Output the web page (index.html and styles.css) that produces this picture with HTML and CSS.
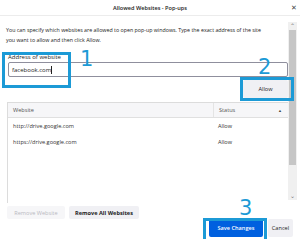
FILE: index.html
```html
<!DOCTYPE html>
<html lang="en">
  <head>
    <meta charset="UTF-8" />
    <title>Allowed Websites - Pop-ups</title>
    <link rel="stylesheet" href="styles.css">
  </head>
  <body>
    <!-- title bar -->
    <div class="titlebar">
      <span class="title">Allowed Websites - Pop-ups</span>
      <span class="close">&#x2715;</span>
    </div>

    <div class="main">
      <div class="content">
        <p class="intro">
          You can specify which websites are allowed to open pop-up windows. Type the exact address of the site<br>
          you want to allow and then click Allow.
        </p>

        <label class="label">Address of website</label>
        <div class="urlbox">facebook.com<span class="caret"></span></div>

        <div class="allowrow">
          <button class="btn allow">Allow</button>
        </div>

        <!-- site list -->
        <div class="table">
          <div class="thead">
            <div class="col-site">Website</div>
            <div class="col-status">Status <span class="sort">&#9650;</span></div>
          </div>
          <div class="trow">
            <div class="col-site">http://drive.google.com</div>
            <div class="col-status">Allow</div>
          </div>
          <div class="trow">
            <div class="col-site">https://drive.google.com</div>
            <div class="col-status">Allow</div>
          </div>
        </div>

        <div class="actions">
          <button class="btn disabled">Remove Website</button>
          <button class="btn bold">Remove All Websites</button>
        </div>
      </div>

      <div class="scrollbar">
        <span class="arrow">&#8963;</span>
        <div class="track"><div class="thumb"></div></div>
        <span class="arrow">&#8964;</span>
      </div>
    </div>

    <div class="footer">
      <button class="btn primary">Save Changes</button>
      <button class="btn cancel">Cancel</button>
    </div>

    <!-- tutorial marks -->
    <div class="mark box1"></div>
    <div class="mark box2"></div>
    <div class="mark box3"></div>
    <span class="num n1">1</span>
    <span class="num n2">2</span>
    <span class="num n3">3</span>
  </body>
</html>
```

FILE: styles.css
```css
body {
  margin: 0;
  width: 300px;
  height: 239px;
  overflow: hidden;
  background: #fff;
  font-family: "Open Sans", "Noto Sans", sans-serif;
  font-size: 6px;
  color: #222;
  position: relative;
}

/* title bar */
.titlebar {
  height: 15px;
  border-bottom: 1px solid #ececec;
  display: flex;
  align-items: center;
  justify-content: center;
  position: relative;
}
.title {
  font-weight: 600;
  font-size: 5.6px;
}
.close {
  position: absolute;
  right: 3px;
  top: 3px;
  font-size: 7px;
  color: #444;
}

.main {
  display: flex;
  height: 187px;
}

.content {
  width: 282px;
  padding-left: 6px;
  padding-top: 9px;
}

.intro {
  margin: 0 0 8px 0;
  line-height: 10px;
  font-size: 5.3px;
  white-space: nowrap;
}

.label {
  display: block;
  font-size: 6px;
  margin-left: 2px;
  line-height: 8px;
}

.urlbox {
  margin-left: 2px;
  margin-top: 1px;
  height: 13px;
  border: 1px solid #8f8f9d;
  border-radius: 2px;
  display: flex;
  align-items: center;
  padding-left: 3px;
  font-size: 6px;
}
.caret {
  width: 1px;
  height: 8px;
  background: #222;
}

.allowrow {
  display: flex;
  justify-content: flex-end;
  margin-top: 3px;
}

.btn {
  border: none;
  background: #f0f0f4;
  border-radius: 2px;
  font-family: inherit;
  font-size: 5.6px;
  color: #222;
  padding: 0;
  height: 14px;
  white-space: nowrap;
}
.allow {
  width: 45px;
  height: 18px;
}

.table {
  margin-top: 4px;
  margin-left: 1px;
  height: 100px;
  border: 1px solid #dcdcdc;
  border-right: none;
  border-bottom: none;
  font-size: 5.6px;
}
.thead {
  display: flex;
  height: 14px;
  align-items: center;
  background: #f6f6f8;
  border-bottom: 1px solid #e0e0e0;
  color: #555;
}
.trow {
  display: flex;
  height: 16px;
  align-items: center;
  color: #333;
}
.trow:first-of-type {
  margin-top: 1px;
}
.col-site {
  width: 200px;
  flex-shrink: 0;
  padding-left: 5px;
}
.col-status {
  flex: 1;
  padding-left: 5px;
  display: flex;
  justify-content: space-between;
  padding-right: 6px;
}
.thead .col-status {
  border-left: 1px solid #e4e4e4;
  height: 14px;
  align-items: center;
}
.sort {
  font-size: 4px;
  color: #444;
}

.actions {
  display: flex;
  gap: 4px;
  margin-top: 3px;
  margin-left: 1px;
}
.actions .btn {
  height: 13px;
}
.disabled {
  width: 58px;
  color: #b9b9bf;
  background: #f6f6f8;
}
.bold {
  width: 70px;
  font-weight: 700;
}

/* scrollbar */
.scrollbar {
  width: 9px;
  margin-top: 6px;
  display: flex;
  flex-direction: column;
  align-items: center;
  background: #f0f0f0;
  height: 178px;
}
.arrow {
  font-size: 6px;
  height: 8px;
  line-height: 8px;
  color: #777;
}
.track {
  flex: 1;
  width: 7px;
  display: flex;
  flex-direction: column;
}
.thumb {
  height: 135px;
  background: #c6c6c6;
}

.footer {
  display: flex;
  justify-content: flex-end;
  gap: 5px;
  padding-right: 7px;
  margin-top: 16px;
}
.primary {
  width: 54px;
  height: 18px;
  background: #0060df;
  color: #fff;
  font-weight: 600;
}
.cancel {
  width: 25px;
  height: 18px;
}

/* tutorial marks */
.mark {
  position: absolute;
  border: 3px solid #1c9ad6;
}
.box1 {
  left: 2px;
  top: 52px;
  width: 63px;
  height: 30px;
}
.box2 {
  left: 240px;
  top: 77px;
  width: 48px;
  height: 18px;
}
.box3 {
  left: 203px;
  top: 218px;
  width: 58px;
  height: 20px;
}
.num {
  position: absolute;
  color: #1c9ad6;
  font-family: "DejaVu Sans", sans-serif;
  font-size: 21px;
  line-height: 21px;
}
.n1 {
  left: 80px;
  top: 49px;
}
.n2 {
  left: 258px;
  top: 57px;
}
.n3 {
  left: 239px;
  top: 198px;
}
```
